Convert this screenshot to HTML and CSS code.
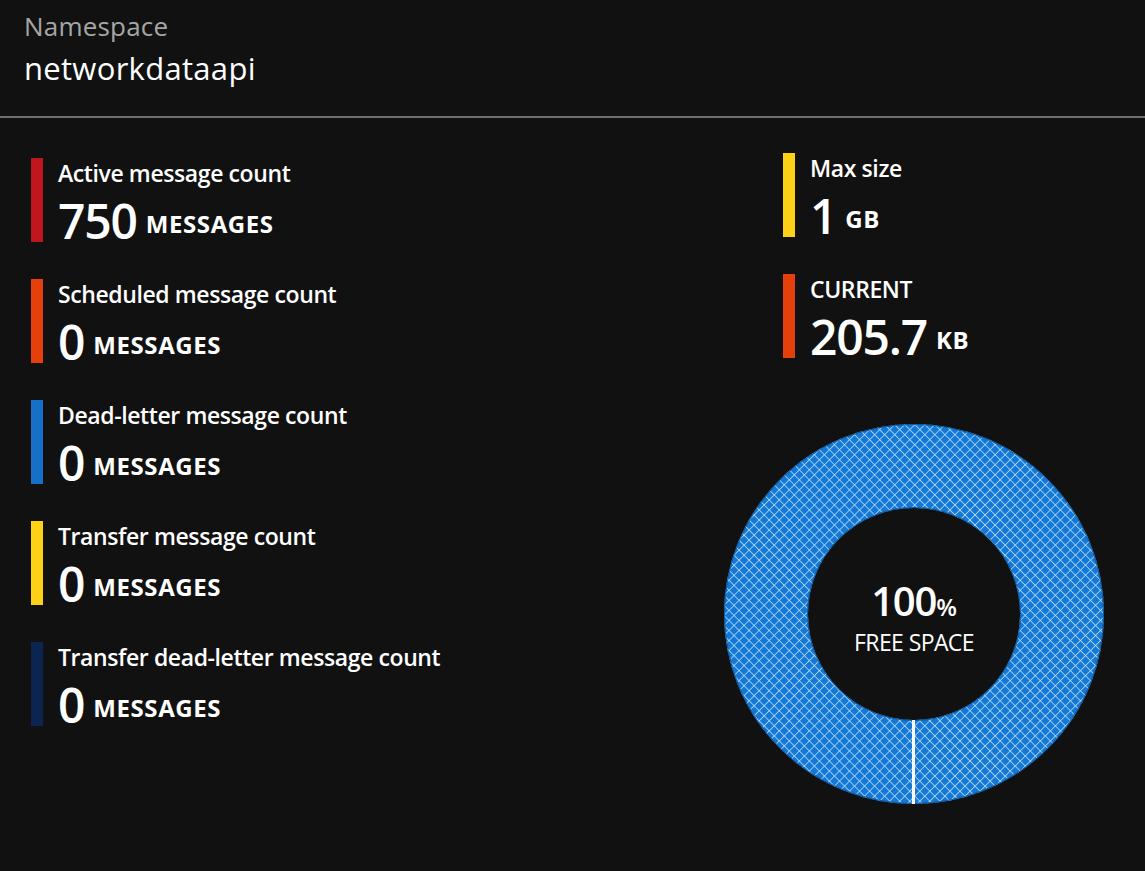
FILE: index.html
```html
<!DOCTYPE html>
<html lang="en">
<head>
    <meta charset="UTF-8">
    <meta name="viewport" content="width=device-width, initial-scale=1.0">
    <title>networkdataapi</title>
    <link rel="stylesheet" href="styles.css">
</head>
<body>
    <div class="header">
        <div class="header-label">Namespace</div>
        <div class="header-value">networkdataapi</div>
    </div>

    <div class="content">
        <div class="counts">
            <div class="stat red">
                <div class="stat-label">Active message count</div>
                <div class="stat-value">750<span class="unit">MESSAGES</span></div>
            </div>
            <div class="stat orange">
                <div class="stat-label">Scheduled message count</div>
                <div class="stat-value">0<span class="unit">MESSAGES</span></div>
            </div>
            <div class="stat blue">
                <div class="stat-label">Dead-letter message count</div>
                <div class="stat-value">0<span class="unit">MESSAGES</span></div>
            </div>
            <div class="stat yellow">
                <div class="stat-label">Transfer message count</div>
                <div class="stat-value">0<span class="unit">MESSAGES</span></div>
            </div>
            <div class="stat navy">
                <div class="stat-label">Transfer dead-letter message count</div>
                <div class="stat-value">0<span class="unit">MESSAGES</span></div>
            </div>
        </div>

        <div class="size">
            <div class="size-stats">
                <div class="stat yellow">
                    <div class="stat-label">Max size</div>
                    <div class="stat-value">1<span class="unit">GB</span></div>
                </div>
                <div class="stat orange">
                    <div class="stat-label">CURRENT</div>
                    <div class="stat-value">205.7<span class="unit">KB</span></div>
                </div>
            </div>

            <div class="donut">
                <svg width="380" height="380" viewBox="0 0 380 380">
                    <defs>
                        <pattern id="hatch" width="7.1" height="7.1" patternUnits="userSpaceOnUse" patternTransform="rotate(45)">
                            <rect width="7.1" height="7.1" fill="#1479d6"/>
                            <line x1="0" y1="0" x2="7.1" y2="0" stroke="#b3daf8" stroke-width="1.6"/>
                            <line x1="0" y1="0" x2="0" y2="7.1" stroke="#b3daf8" stroke-width="1.6"/>
                        </pattern>
                    </defs>
                    <circle cx="190" cy="190" r="148" fill="none" stroke="url(#hatch)" stroke-width="84"/>
                    <circle cx="190" cy="190" r="189.5" fill="none" stroke="#0d5aa3" stroke-width="1"/>
                    <circle cx="190" cy="190" r="106.5" fill="none" stroke="#0d5aa3" stroke-width="1"/>
                    <line x1="189.5" y1="296" x2="189.5" y2="380" stroke="#ffffff" stroke-width="3"/>
                </svg>
                <div class="donut-text">
                    <div class="donut-pct">100<span class="pct">%</span></div>
                    <div class="donut-caption">FREE SPACE</div>
                </div>
            </div>
        </div>
    </div>
</body>
</html>
```

FILE: styles.css
```css
* {
    margin: 0;
    padding: 0;
    box-sizing: border-box;
}

body {
    background: #111111;
    color: #ffffff;
    font-family: "Open Sans", "Noto Sans", sans-serif;
    width: 1145px;
    height: 871px;
    overflow: hidden;
}

.header {
    height: 118px;
    padding: 9px 24px 0;
    border-bottom: 2px solid #6e6e6e;
}

.header-label {
    font-size: 26px;
    color: #a6a6a6;
    line-height: 34px;
    letter-spacing: 0.2px;
}

.header-value {
    font-size: 31px;
    line-height: 38px;
    letter-spacing: 0.3px;
    margin-top: 6px;
}

.content {
    display: flex;
}

.counts {
    width: 724px;
    padding: 40px 0 0 31px;
    display: flex;
    flex-direction: column;
    gap: 37px;
}

.stat {
    height: 84px;
    border-left: 12px solid #888;
    padding-left: 15px;
}

.stat.red { border-color: #c0161d; }
.stat.orange { border-color: #e5400c; }
.stat.blue { border-color: #1570c8; }
.stat.yellow { border-color: #fcd116; }
.stat.navy { border-color: #0b2550; }

.stat-label {
    font-size: 23px;
    font-weight: 600;
    line-height: 30px;
    letter-spacing: -0.4px;
}

.stat-value {
    font-size: 48px;
    font-weight: 600;
    line-height: 52px;
    letter-spacing: -1.2px;
    margin-top: 7px;
}

.unit {
    font-size: 24px;
    font-weight: 700;
    letter-spacing: 0.6px;
    margin-left: 9px;
    vertical-align: 6px;
}

.size {
    width: 380px;
    padding-top: 35px;
}

.size-stats {
    margin-left: 59px;
    display: flex;
    flex-direction: column;
    gap: 37px;
}

.donut {
    position: relative;
    width: 380px;
    height: 380px;
    margin-top: 66px;
}

.donut svg {
    display: block;
}

.donut-text {
    position: absolute;
    left: 0;
    right: 0;
    top: 155px;
    text-align: center;
}

.donut-pct {
    font-size: 40px;
    font-weight: 600;
    line-height: 44px;
    letter-spacing: -1.2px;
}

.pct {
    font-size: 24px;
    letter-spacing: 0;
}

.donut-caption {
    font-size: 23px;
    line-height: 26px;
    letter-spacing: -0.6px;
}
```
